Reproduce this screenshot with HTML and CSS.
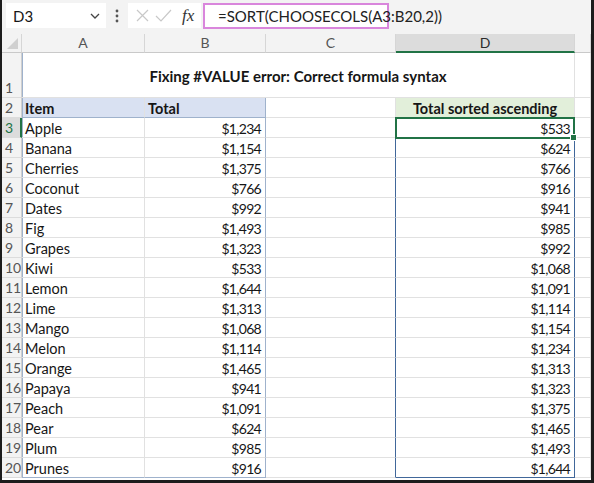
FILE: index.html
```html
<!DOCTYPE html>
<html lang="en">
<head>
  <meta charset="UTF-8">
  <title>SORT CHOOSECOLS</title>
  <link rel="stylesheet" href="styles.css">
</head>
<body>
<div class="window">

  <!-- Formula bar -->
  <div class="formula-bar">
    <div class="name-box">
      <span>D3</span>
      <svg class="chevron" width="10" height="6" viewBox="0 0 10 6"><path d="M1 1l4 4 4-4" fill="none" stroke="#444" stroke-width="1.3"/></svg>
    </div>
    <svg class="dots" width="4" height="14" viewBox="0 0 4 14"><circle cx="2" cy="2" r="1.4" fill="#555"/><circle cx="2" cy="7" r="1.4" fill="#555"/><circle cx="2" cy="12" r="1.4" fill="#555"/></svg>
    <div class="fx-box">
      <svg width="13" height="13" viewBox="0 0 13 13"><path d="M1 1l11 11M12 1L1 12" stroke="#c8c8c8" stroke-width="1.2"/></svg>
      <svg width="17" height="13" viewBox="0 0 17 13"><path d="M1 7l5 5L16 1" fill="none" stroke="#c8c8c8" stroke-width="1.2"/></svg>
      <span class="fx">fx</span>
    </div>
    <div class="formula">=SORT(CHOOSECOLS(A3:B20,2))</div>
  </div>

  <!-- Sheet -->
  <div class="sheet">
    <div class="row col-heads">
      <div class="corner"></div>
      <div class="ch">A</div>
      <div class="ch">B</div>
      <div class="ch">C</div>
      <div class="ch ch-active">D</div>
      <div class="ch"></div>
    </div>
    <div class="row tall">
      <div class="rh">1</div>
      <div class="title">Fixing #VALUE error: Correct formula syntax</div>
      <div class="c"></div>
    </div>
    <div class="row">
      <div class="rh">2</div>
      <div class="c a hd blue">Item</div>
      <div class="c b hd blue">Total</div>
      <div class="c"></div>
      <div class="c hd green center">Total sorted ascending</div>
      <div class="c"></div>
    </div>
    <div class="row"><div class="rh rh-active">3</div><div class="c a">Apple</div><div class="c b num">$1,234</div><div class="c cl"></div><div class="c d num">$533</div><div class="c"></div></div>
    <div class="row"><div class="rh">4</div><div class="c a">Banana</div><div class="c b num">$1,154</div><div class="c cl"></div><div class="c d num">$624</div><div class="c"></div></div>
    <div class="row"><div class="rh">5</div><div class="c a">Cherries</div><div class="c b num">$1,375</div><div class="c cl"></div><div class="c d num">$766</div><div class="c"></div></div>
    <div class="row"><div class="rh">6</div><div class="c a">Coconut</div><div class="c b num">$766</div><div class="c cl"></div><div class="c d num">$916</div><div class="c"></div></div>
    <div class="row"><div class="rh">7</div><div class="c a">Dates</div><div class="c b num">$992</div><div class="c cl"></div><div class="c d num">$941</div><div class="c"></div></div>
    <div class="row"><div class="rh">8</div><div class="c a">Fig</div><div class="c b num">$1,493</div><div class="c cl"></div><div class="c d num">$985</div><div class="c"></div></div>
    <div class="row"><div class="rh">9</div><div class="c a">Grapes</div><div class="c b num">$1,323</div><div class="c cl"></div><div class="c d num">$992</div><div class="c"></div></div>
    <div class="row"><div class="rh">10</div><div class="c a">Kiwi</div><div class="c b num">$533</div><div class="c cl"></div><div class="c d num">$1,068</div><div class="c"></div></div>
    <div class="row"><div class="rh">11</div><div class="c a">Lemon</div><div class="c b num">$1,644</div><div class="c cl"></div><div class="c d num">$1,091</div><div class="c"></div></div>
    <div class="row"><div class="rh">12</div><div class="c a">Lime</div><div class="c b num">$1,313</div><div class="c cl"></div><div class="c d num">$1,114</div><div class="c"></div></div>
    <div class="row"><div class="rh">13</div><div class="c a">Mango</div><div class="c b num">$1,068</div><div class="c cl"></div><div class="c d num">$1,154</div><div class="c"></div></div>
    <div class="row"><div class="rh">14</div><div class="c a">Melon</div><div class="c b num">$1,114</div><div class="c cl"></div><div class="c d num">$1,234</div><div class="c"></div></div>
    <div class="row"><div class="rh">15</div><div class="c a">Orange</div><div class="c b num">$1,465</div><div class="c cl"></div><div class="c d num">$1,313</div><div class="c"></div></div>
    <div class="row"><div class="rh">16</div><div class="c a">Papaya</div><div class="c b num">$941</div><div class="c cl"></div><div class="c d num">$1,323</div><div class="c"></div></div>
    <div class="row"><div class="rh">17</div><div class="c a">Peach</div><div class="c b num">$1,091</div><div class="c cl"></div><div class="c d num">$1,375</div><div class="c"></div></div>
    <div class="row"><div class="rh">18</div><div class="c a">Pear</div><div class="c b num">$624</div><div class="c cl"></div><div class="c d num">$1,465</div><div class="c"></div></div>
    <div class="row"><div class="rh">19</div><div class="c a">Plum</div><div class="c b num">$985</div><div class="c cl"></div><div class="c d num">$1,493</div><div class="c"></div></div>
    <div class="row last"><div class="rh">20</div><div class="c a">Prunes</div><div class="c b num">$916</div><div class="c cl"></div><div class="c d num">$1,644</div><div class="c"></div></div>

    <!-- active cell D3 -->
    <div class="selection"><span class="handle"></span></div>
  </div>

</div>
</body>
</html>
```

FILE: styles.css
```css
body {
  margin: 0;
  font-family: Lato, "Liberation Sans", sans-serif;
  color: #161616;
}
.window {
  width: 594px;
  height: 483px;
  box-sizing: border-box;
  border-left: 2px solid #1c1c1c;
  border-right: 3px solid #1c1c1c;
  border-bottom: 3px solid #1c1c1c;
  background: #fff;
  overflow: hidden;
}

/* formula bar */
.formula-bar {
  height: 34px;
  box-sizing: border-box;
  padding-top: 3px;
  background: #f3f3f3;
  display: flex;
  align-items: flex-start;
}
.name-box {
  margin-left: 4px;
  width: 100px;
  height: 25px;
  box-sizing: border-box;
  background: #fff;
  display: flex;
  align-items: center;
  justify-content: space-between;
  padding: 0 6px 0 7px;
  font-size: 15px;
}
.dots {
  margin: 6px 0 0 9px;
}
.fx-box {
  margin-left: 9px;
  width: 73px;
  height: 25px;
  box-sizing: border-box;
  background: #fff;
  display: flex;
  align-items: center;
  padding-left: 8px;
  gap: 6px;
}
.fx {
  margin-left: 4px;
  font-family: "Liberation Serif", serif;
  font-style: italic;
  font-size: 17px;
  color: #333;
}
.formula {
  margin-left: 2px;
  width: 186px;
  height: 26px;
  box-sizing: border-box;
  border: 2px solid #d986dc;
  background: #fff;
  padding-left: 13px;
  font-size: 15px;
  line-height: 22px;
  color: #222;
}

/* sheet grid */
.sheet {
  position: relative;
}
.row {
  display: grid;
  grid-template-columns: 20px 123px 121px 130px 179px 16px;
  height: 20px;
  font-size: 14.5px;
}
.row > div {
  box-sizing: border-box;
  border-right: 1px solid #e1e1e1;
  border-bottom: 1px solid #e1e1e1;
  white-space: nowrap;
  overflow: hidden;
}
.row.tall {
  height: 45px;
  grid-template-columns: 20px 553px 16px;
}
.col-heads {
  height: 19px;
  background: #f3f3f3;
}
.row.col-heads > div {
  border-right-color: #d6d6d6;
  border-bottom-color: #c9c9c9;
  color: #555;
  text-align: center;
  font-size: 14px;
  line-height: 18px;
}
.row.col-heads .ch-active {
  background: #dcdcdc;
  border-bottom: 2px solid #217346;
  color: #2b2b2b;
}
.corner {
  position: relative;
}
.corner::after {
  content: "";
  position: absolute;
  right: 3px;
  bottom: 3px;
  border-left: 11px solid transparent;
  border-bottom: 11px solid #d0d0d0;
}
.row > .rh {
  background: #f3f3f3;
  border-right-color: #cfcfcf;
  border-bottom-color: #dcdcdc;
  color: #555;
  font-size: 14px;
  padding-left: 3px;
  display: flex;
  align-items: flex-end;
  line-height: 19px;
}
.row > .rh-active {
  background: #dcdcdc;
  border-right: 2px solid #217346;
  color: #217346;
}
.row > .title {
  font-weight: bold;
  text-align: center;
  font-size: 15px;
  line-height: 47px;
  border-right: 1px solid #e1e1e1;
  border-bottom-color: #e1e1e1;
}
.c {
  padding: 0 3px;
  line-height: 21px;
}
.num {
  text-align: right;
  font-size: 14px;
  letter-spacing: -0.7px;
  padding-right: 4px;
}
.hd {
  font-weight: bold;
}
.center {
  text-align: center;
}
.blue {
  background: #d9e1f2;
}
.green {
  background: #e2efda;
}

/* range outlines */
.row > .a {
  box-shadow: inset 1px 0 0 #9fb2cc;
}
.row.tall > .title {
  box-shadow: inset 245px -1px 0 -244px #9fb2cc;
}
.row > .b {
  border-right-color: #9fb2cc;
}
.row > .hd.blue {
  border-bottom-color: #9fb2cc;
}
.row > .cl,
.row > .d {
  border-right-color: #41679a;
}
.row.last > .a,
.row.last > .b {
  border-bottom-color: #9fb2cc;
}
.row.last > .d {
  border-bottom-color: #41679a;
}

/* active cell */
.selection {
  position: absolute;
  left: 393px;
  top: 83px;
  width: 180px;
  height: 22px;
  border: 2px solid #217346;
  box-sizing: border-box;
}
.handle {
  position: absolute;
  right: -4px;
  bottom: -4px;
  width: 5px;
  height: 5px;
  background: #217346;
  border: 1px solid #fff;
}
```
